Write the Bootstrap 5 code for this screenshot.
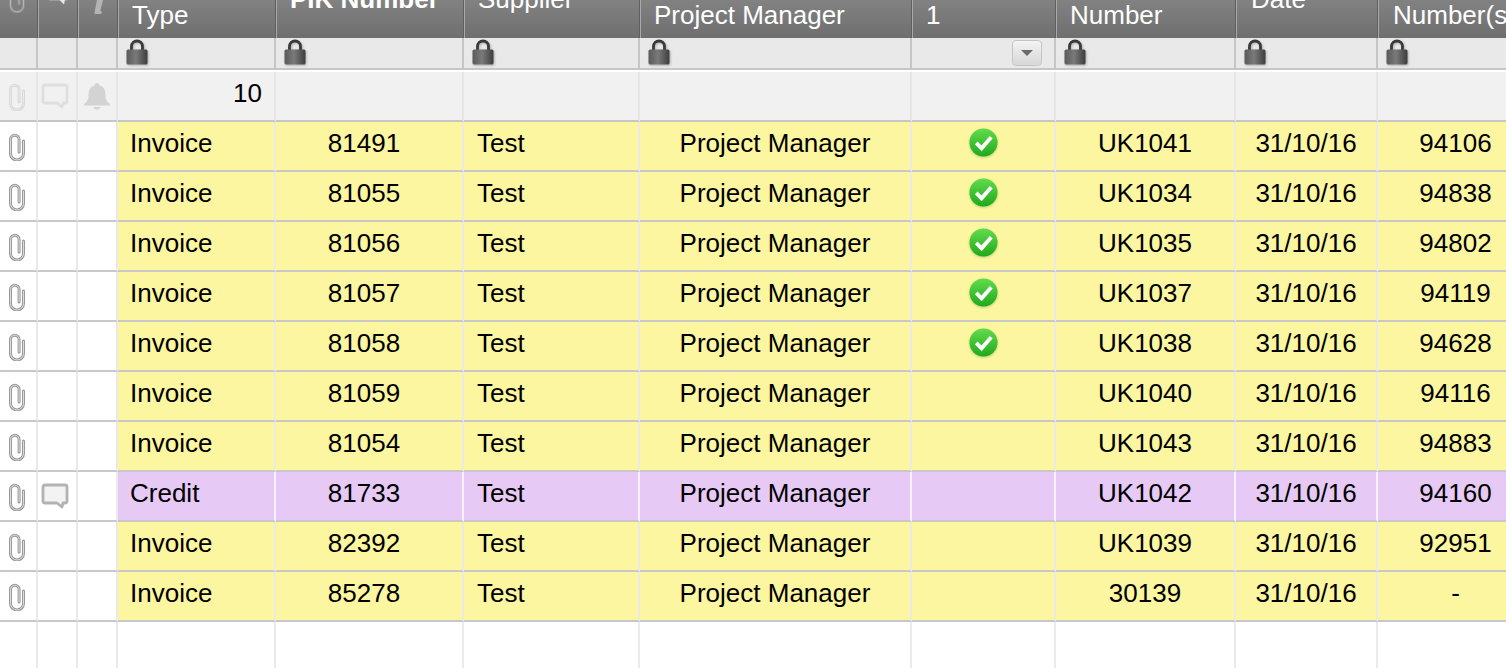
<!DOCTYPE html>
<html lang="en"><head><meta charset="utf-8"><title>Invoices</title>
<link href="https://cdn.jsdelivr.net/npm/bootstrap@5.3.0/dist/css/bootstrap.min.css" rel="stylesheet">
<style>
html,body{height:100%;overflow:hidden;background:#fff}
.grid-wrap{width:1506px;height:668px;overflow:hidden;position:relative}
.inv-grid{table-layout:fixed;width:1534px;border-collapse:separate;border-spacing:0;font:26px/30px "Liberation Sans",Arial,sans-serif;color:#000}
.inv-grid td,.inv-grid th{padding:0;overflow:hidden;white-space:nowrap;vertical-align:top}
.head-row th{height:38px;background:linear-gradient(#828282,#6f6f6f);color:#fff;font-weight:400;border-right:1px solid #5f5f5f;border-left:1px solid #a9a9a9}
.head-row th:first-child{border-left:0}
.head-row th:nth-child(n+4){padding-left:13px}
.head-row th.hd-date,.head-row th.hd-last{padding-left:14px}
.hd-text{display:block;height:38px;overflow:hidden}
.hd-clip{display:block;margin-top:-16px;line-height:30px}
.hd-low{display:block;line-height:30px}
.hd-bold{font-weight:700}
.filter-row td{height:32px;background:#e9e9e9;border-right:2px solid #c6c6c6;border-bottom:2px solid #c6c6c6}
.gap-row td{height:2px;background:#fff;line-height:0;font-size:0}
.sum-row td{height:50px;background:#f1f1f1;border-right:2px solid #e6e6e6;border-bottom:2px solid #c6c6c6}
.data-row td{height:50px;border-right:2px solid #eaeaea;border-bottom:2px solid #c8c8c8;padding-top:6px;text-align:center;background:#fbf69f}
.data-row td.side{background:#fff;text-align:left;padding-top:0}
.data-row.credit td:not(.side){background:#e6caf5;border-right-color:#f6f1fa}
.data-row td.lft{text-align:left;padding-left:12px}
.data-row td.lft2{text-align:left;padding-left:13px}
.data-row td.pik{padding-right:10px}
.data-row td.lastc{padding-left:1px}
.empty-row td{height:48px;border-right:2px solid #eaeaea}
.inv-grid td.sum-val{text-align:right;padding:6px 12px 0 0}
.ic{display:block}
.ic-clip{margin:11px 0 0 8px}
.ic-msg{margin:11px 0 0 3px}
.ic-bell{margin:10px 0 0 5px}
.ic-lock{margin:1px 0 0 8px;filter:drop-shadow(1px 1px 1px rgba(0,0,0,.25))}
.ic-ok{margin:0 auto;filter:drop-shadow(0 1px 1px rgba(0,80,0,.25))}
.hd-clipic{margin:-15px 0 0 8px;opacity:.6}
.hd-msg{margin:-17px 0 0 7px}
.hd-info{margin:0 0 0 12px}
.dd-btn{width:30px;height:26px;margin:2px 12px 0 auto;border:1px solid #c4c4c4;border-radius:4px;background:linear-gradient(#f4f4f4,#d6d6d6);box-shadow:inset 0 0 1px #fff;display:flex;align-items:center;justify-content:center}
.dd-arrow{width:0;height:0;border-left:6.500px solid transparent;border-right:6.500px solid transparent;border-top:6px solid #6a6a6a}
.faded{opacity:.28}
.faded-bell{opacity:.4}
</style></head><body>
<svg width="0" height="0" class="position-absolute">
<defs>
<linearGradient id="lk" x1="0" x2="1" y1="0" y2="0"><stop offset="0" stop-color="#5a5a5a"/><stop offset=".45" stop-color="#7a7a7a"/><stop offset="1" stop-color="#3d3d3d"/></linearGradient>
<linearGradient id="gr" x1="0" x2="0" y1="0" y2="1"><stop offset="0" stop-color="#62dc4c"/><stop offset="1" stop-color="#1fa91b"/></linearGradient>
<symbol id="clip" viewBox="0 0 18 28"><path d="M15.500 8V20.500a6.500 6.500 0 0 1-13 0V6.500a4.300 4.300 0 0 1 8.600 0V19" fill="none" stroke="#9a9a9a" stroke-width="3" stroke-linecap="round"/><path d="M15.500 8V20.500a6.500 6.500 0 0 1-13 0V6.500a4.300 4.300 0 0 1 8.600 0V19" fill="none" stroke="#dcdcdc" stroke-width="1"/></symbol>
<symbol id="msg" viewBox="0 0 28 26"><path d="M4 2H24a2 2 0 0 1 2 2V18a2 2 0 0 1-2 2H22L21 24 16 20H4a2 2 0 0 1-2-2V4A2 2 0 0 1 4 2Z" fill="#f3f3f3" stroke="#b2b2b2" stroke-width="2.800" stroke-linejoin="round"/></symbol>
<symbol id="lock" viewBox="0 0 22 26"><path d="M5.500 12V7.500a5.500 5.500 0 0 1 11 0V12" fill="none" stroke="#3a3a3a" stroke-width="2.800"/><rect x="0.500" y="10.500" width="21" height="15" rx="1.500" fill="url(#lk)"/></symbol>
<symbol id="ok" viewBox="0 0 30 30"><circle cx="15" cy="15" r="14.500" fill="url(#gr)"/><path d="M7.500 15.500l5.500 5.500 10-11.500" fill="none" stroke="#fff" stroke-width="4"/></symbol>
<symbol id="bell" viewBox="0 0 28 28"><path d="M14 1a2.500 2.500 0 0 1 2.500 2.500C22 5 22.500 9 22.500 14c0 3.500 1.500 6 4.500 8v1.500H1V22c3-2 4.500-4.500 4.500-8 0-5 .5-9 6-10.500A2.500 2.500 0 0 1 14 1ZM10.500 25h7a3.500 2.500 0 0 1-7 0Z" fill="#a8a8a8"/></symbol>
</defs></svg>
<main class="grid-wrap">
<table class="inv-grid">
<colgroup><col style="width:38px"><col style="width:40px"><col style="width:40px"><col style="width:158px"><col style="width:188px"><col style="width:176px"><col style="width:272px"><col style="width:144px"><col style="width:180px"><col style="width:142px"><col style="width:156px"></colgroup>
<thead>
<tr class="head-row">
<th><span class="hd-text"><svg class="ic hd-clipic" width="18" height="28"><use href="#clip"/></svg></span></th>
<th><span class="hd-text"><svg class="ic hd-msg" width="24" height="24" viewBox="0 0 28 26"><path d="M4 2H24a2 2 0 0 1 2 2V17a2 2 0 0 1-2 2H22L21 24 16 19H4a2 2 0 0 1-2-2V4A2 2 0 0 1 4 2Z" fill="#e8e8e8"/></svg></span></th>
<th><span class="hd-text"><svg class="ic hd-info" width="14" height="14" viewBox="0 0 14 14"><path d="M6 0H12L9.500 10Q9 12 11 12L10 14H4Q3 13 4 10Z" fill="#b4b4b4"/></svg></span></th>
<th><span class="hd-text"><span class="hd-low">Type</span></span></th>
<th><span class="hd-text"><span class="hd-clip hd-bold">PIK Number</span></span></th>
<th><span class="hd-text"><span class="hd-clip">Supplier</span></span></th>
<th><span class="hd-text"><span class="hd-low">Project Manager</span></span></th>
<th><span class="hd-text"><span class="hd-low">1</span></span></th>
<th><span class="hd-text"><span class="hd-low">Number</span></span></th>
<th class="hd-date"><span class="hd-text"><span class="hd-clip">Date</span></span></th>
<th class="hd-last"><span class="hd-text"><span class="hd-low">Number(s)</span></span></th>
</tr>
<tr class="filter-row">
<td></td><td></td><td></td>
<td><svg class="ic ic-lock" width="22" height="26"><use href="#lock"/></svg></td>
<td><svg class="ic ic-lock" width="22" height="26"><use href="#lock"/></svg></td>
<td><svg class="ic ic-lock" width="22" height="26"><use href="#lock"/></svg></td>
<td><svg class="ic ic-lock" width="22" height="26"><use href="#lock"/></svg></td>
<td><div class="dd-btn"><span class="dd-arrow"></span></div></td>
<td><svg class="ic ic-lock" width="22" height="26"><use href="#lock"/></svg></td>
<td><svg class="ic ic-lock" width="22" height="26"><use href="#lock"/></svg></td>
<td><svg class="ic ic-lock" width="22" height="26"><use href="#lock"/></svg></td>
</tr>
<tr class="gap-row"><td colspan="11"></td></tr>
<tr class="sum-row">
<td><svg class="ic ic-clip faded" width="18" height="28"><use href="#clip"/></svg></td>
<td><svg class="ic ic-msg faded" width="28" height="26"><use href="#msg"/></svg></td>
<td><svg class="ic ic-bell faded-bell" width="28" height="28"><use href="#bell"/></svg></td>
<td class="sum-val">10</td>
<td></td><td></td><td></td><td></td><td></td><td></td><td></td>
</tr>
</thead>
<tbody id="rows"></tbody>
</table>
</main>
<script>
const data=[
["Invoice","81491",1,"UK1041","94106"],["Invoice","81055",1,"UK1034","94838"],["Invoice","81056",1,"UK1035","94802"],
["Invoice","81057",1,"UK1037","94119"],["Invoice","81058",1,"UK1038","94628"],["Invoice","81059",0,"UK1040","94116"],
["Invoice","81054",0,"UK1043","94883"],["Credit","81733",0,"UK1042","94160"],["Invoice","82392",0,"UK1039","92951"],
["Invoice","85278",0,"30139","-"]];
let h="";
for(const d of data){
 const c=d[0]==="Credit";
 h+=`<tr class="data-row${c?" credit":""}"><td class="side"><svg class="ic ic-clip" width="18" height="28"><use href="#clip"/></svg></td><td class="side">${c?'<svg class="ic ic-msg" width="28" height="26"><use href="#msg"/></svg>':''}</td><td class="side"></td><td class="lft">${d[0]}</td><td class="pik">${d[1]}</td><td class="lft2">Test</td><td>Project Manager</td><td>${d[2]?'<svg class="ic ic-ok" width="29" height="29"><use href="#ok"/></svg>':''}</td><td>${d[3]}</td><td>31/10/16</td><td class="lastc">${d[4]}</td></tr>`;
}
h+='<tr class="empty-row">'+'<td></td>'.repeat(11)+'</tr>';
document.getElementById("rows").innerHTML=h;
</script>
<script src="https://cdn.jsdelivr.net/npm/bootstrap@5.3.0/dist/js/bootstrap.bundle.min.js"></script>
</body></html>
